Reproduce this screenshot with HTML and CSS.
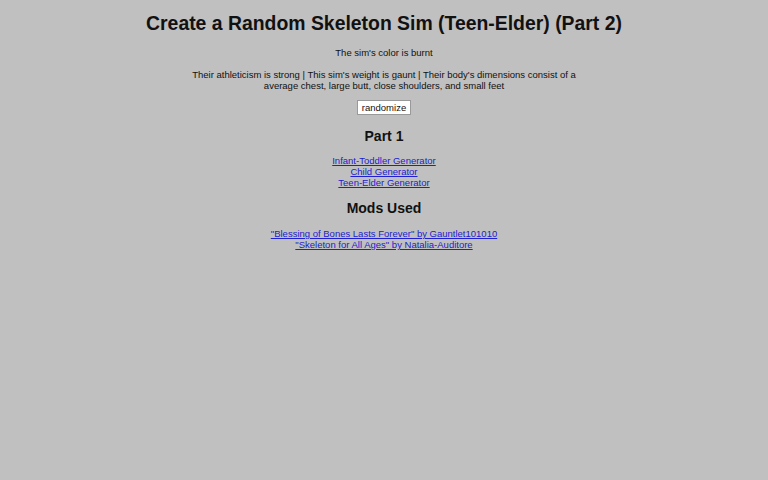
FILE: index.html
```html
<!DOCTYPE html>
<html lang="en">
<head>
    <meta charset="UTF-8">
    <title>Random Skeleton Sim (Teen-Elder) (Part 2)</title>
    <link rel="stylesheet" href="styles.css">
</head>
<body>
<div id="page">
    <h1>Create a Random Skeleton Sim (Teen-Elder) (Part 2)</h1>
    <p id="color">The sim's color is burnt</p>
    <p id="traits">Their athleticism is strong | This sim's weight is gaunt | Their body's dimensions consist of a average chest, large butt, close shoulders, and small feet</p>
    <button>randomize</button>

    <h2>Part 1</h2>
    <div class="links">
        <a href="#">Infant-Toddler Generator</a><br>
        <a href="#">Child Generator</a><br>
        <a href="#">Teen-Elder Generator</a>
    </div>

    <h2 class="mods">Mods Used</h2>
    <div class="links">
        <a href="#">"Blessing of Bones Lasts Forever" by Gauntlet101010</a><br>
        <a href="#">"Skeleton for All Ages" by Natalia-Auditore</a>
    </div>
</div>
</body>
</html>
```

FILE: styles.css
```css
body { margin:0; background:#c0c0c0; font-family:"Liberation Sans", Arial, sans-serif; color:#111; }
#page { text-align:center; padding-top:10px; }
h1 { margin:0 0 11px; font-size:19.4px; font-weight:bold; line-height:26px; }
p { margin:0 auto; font-size:9.5px; line-height:11px; }
#color { margin-bottom:11px; }
#traits { width:400px; margin-bottom:6px; }
button { font-family:"Liberation Sans", Arial, sans-serif; font-size:9.5px; padding:1px 4px; background:#fff; border:1px solid #999; border-radius:0; color:#111; }
h2 { margin:12px 0 10px; font-size:14px; line-height:18px; }
h2.mods { margin:11px 0 11px; }
.links { font-size:9.5px; line-height:11px; }
.links a { color:#2020d0; }
```
